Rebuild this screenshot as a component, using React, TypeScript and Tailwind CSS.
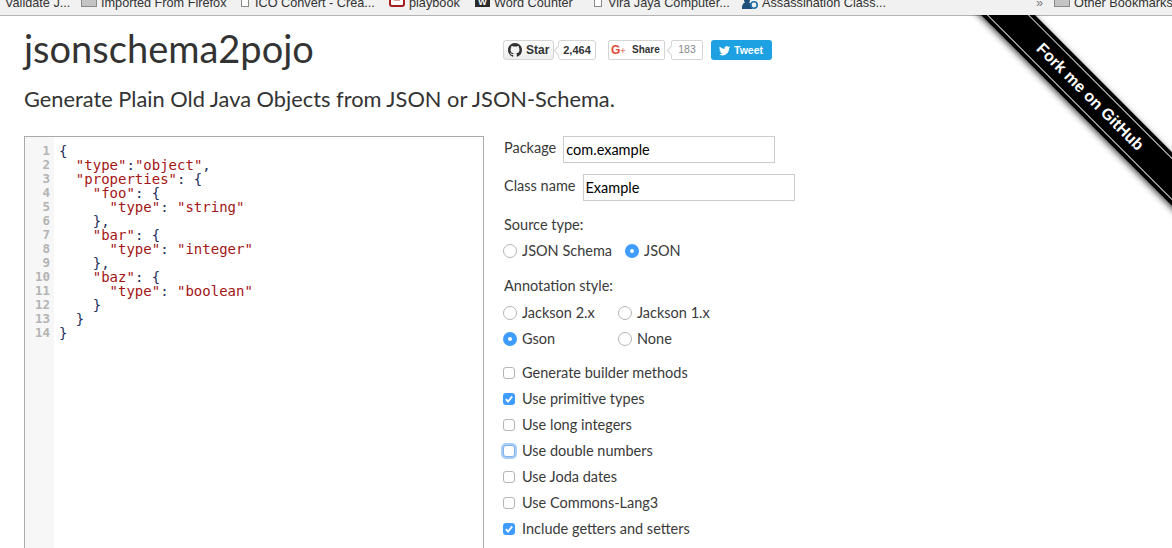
import React from 'react';

const font = "font-['Lato','Liberation_Sans',sans-serif]";

const bookmarks = [
  { label: 'Validate J...', icon: 'none', width: 'w-[76px]' },
  { label: 'Imported From Firefox', icon: 'folder', width: 'w-[159px]' },
  { label: 'ICO Convert - Crea...', icon: 'page', width: 'w-[149px]' },
  { label: 'playbook', icon: 'play', width: 'w-[86px]' },
  { label: 'Word Counter', icon: 'word', width: 'w-[118px]' },
  { label: 'Vira Jaya Computer...', icon: 'page', width: 'w-[149px]' },
  { label: 'Assassination Class...', icon: 'ac', width: 'w-[190px]' },
];

const BookmarkIcon = ({ type }: { type: string }) => {
  if (type === 'folder') return <span className="h-[9px] w-[16px] border border-[#8a8a8a] bg-[#c4c4c4]" />;
  if (type === 'page') return <span className="mr-[2px] ml-[1px] h-[9px] w-[8px] border border-[#888] bg-white" />;
  if (type === 'play')
    return (
      <svg viewBox="0 0 16 9" className="h-[9px] w-[16px]">
        <path d="M1 0v6a2 2 0 0 0 2 2h10a2 2 0 0 0 2-2V0" fill="white" stroke="#a61c22" strokeWidth="2" />
        <path d="M5 0h6v3H5z" fill="#d9a0a0" />
      </svg>
    );
  if (type === 'word')
    return (
      <span className="flex h-[9px] w-[15px] items-end justify-center bg-[#2a2a2a] text-[9px] leading-none font-bold text-white">W</span>
    );
  if (type === 'ac')
    return (
      <svg viewBox="0 0 16 11" className="h-[11px] w-[16px]">
        <circle cx="5" cy="2" r="3" fill="#1f4f78" />
        <path d="M0 9a5 5 0 0 1 10 0v2H0z" fill="#1f4f78" />
        <circle cx="12" cy="7" r="3.2" fill="none" stroke="#1f6fa8" strokeWidth="1.6" />
      </svg>
    );
  return null;
};

const Radio = ({ label, checked, className = '' }: { label: string; checked?: boolean; className?: string }) => (
  <label className={`flex items-center gap-[5px] ${className}`}>
    {checked ? (
      <span className="flex size-[14px] items-center justify-center rounded-full bg-[#3f9cff]">
        <span className="size-[4px] rounded-full bg-white" />
      </span>
    ) : (
      <span className="size-[14px] rounded-full border border-[#b5b5b5] bg-white" />
    )}
    <span>{label}</span>
  </label>
);

const Checkbox = ({ label, checked, focused }: { label: string; checked?: boolean; focused?: boolean }) => (
  <label className="-ml-px flex h-[26px] items-center gap-[7px]">
    {checked ? (
      <span className="flex size-[12px] items-center justify-center rounded-[3px] bg-[#3f9cff]">
        <svg viewBox="0 0 12 12" className="size-[12px]" fill="none" stroke="white" strokeWidth="1.8">
          <path d="M2.8 6.2 5 8.6 9.2 3.4" />
        </svg>
      </span>
    ) : (
      <span
        className={`size-[12px] rounded-[3px] border bg-white ${
          focused ? 'border-[#7fb2e8] shadow-[0_0_0_2px_#a9cdf5]' : 'border-[#b5b5b5]'
        }`}
      />
    )}
    <span>{label}</span>
  </label>
);

const code = [
  ['{'],
  ['  ', '"type"', ':', '"object"', ','],
  ['  ', '"properties"', ': {'],
  ['    ', '"foo"', ': {'],
  ['      ', '"type"', ': ', '"string"'],
  ['    },'],
  ['    ', '"bar"', ': {'],
  ['      ', '"type"', ': ', '"integer"'],
  ['    },'],
  ['    ', '"baz"', ': {'],
  ['      ', '"type"', ': ', '"boolean"'],
  ['    }'],
  ['  }'],
  ['}'],
];

const CodeEditor = () => (
  <div className="flex h-[430px] w-[460px] shrink-0 border border-[#aaa] bg-white font-['DejaVu_Sans_Mono',monospace] text-[14px] leading-[14px]">
    <div className="w-[29px] bg-[#f7f7f7] pt-[7px] pr-[4px] text-right text-[12.5px] font-bold text-[#b4b4b4]">
      {code.map((_, i) => (
        <div key={i}>{i + 1}</div>
      ))}
    </div>
    <div className="pt-[7px] pl-[5px] whitespace-pre text-[#1d2f5c]">
      {code.map((parts, i) => (
        <div key={i} className="h-[14px]">
          {parts.map((p, j) => (
            <span key={j} className={p.startsWith('"') ? 'text-[#a31515]' : ''}>
              {p}
            </span>
          ))}
        </div>
      ))}
    </div>
  </div>
);

const Notch = () => (
  <span className="absolute top-[6px] left-[-4px] size-[7px] rotate-45 border-b border-l border-[#d5d5d5] bg-white" />
);

const SocialButtons = () => (
  <div className="flex items-center font-['Liberation_Sans',sans-serif] text-[11px] font-bold text-[#333]">
    <div className="flex h-[20px] w-[51px] items-center gap-[4px] rounded-[3px] border border-[#d5d5d5] bg-linear-to-b from-[#fcfcfc] to-[#eeeeee] pl-[4px] text-[12px]">
      <svg viewBox="0 0 16 16" className="size-[14px]" fill="#333">
        <path d="M8 0C3.58 0 0 3.58 0 8c0 3.54 2.29 6.53 5.47 7.59.4.07.55-.17.55-.38 0-.19-.01-.82-.01-1.49-2.01.37-2.53-.49-2.69-.94-.09-.23-.48-.94-.82-1.13-.28-.15-.68-.52-.01-.53.63-.01 1.08.58 1.23.82.72 1.21 1.87.87 2.33.66.07-.52.28-.87.51-1.07-1.78-.2-3.64-.89-3.64-3.95 0-.87.31-1.59.82-2.15-.08-.2-.36-1.02.08-2.12 0 0 .67-.21 2.2.82.64-.18 1.32-.27 2-.27s1.36.09 2 .27c1.53-1.04 2.2-.82 2.2-.82.44 1.1.16 1.92.08 2.12.51.56.82 1.27.82 2.15 0 3.07-1.87 3.75-3.65 3.95.29.25.54.73.54 1.48 0 1.07-.01 1.93-.01 2.2 0 .21.15.46.55.38A8.01 8.01 0 0 0 16 8c0-4.42-3.58-8-8-8z" />
      </svg>
      <span>Star</span>
    </div>
    <div className="relative ml-[4px] flex h-[20px] w-[38px] items-center justify-center rounded-[3px] border border-[#d5d5d5] bg-white">
      <Notch />
      <span className="relative">2,464</span>
    </div>
    <div className="ml-[12px] flex h-[20px] w-[57px] items-center rounded-[2px] border border-[#d5d5d5] bg-white pl-[2px] text-[10px]">
      <span className="w-[21px] text-[#dd4b39]">
        <span className="text-[12px]">G</span>
        <span className="text-[9px] text-[#e58a7e]">+</span>
      </span>
      <span className="-mt-[1px]">Share</span>
    </div>
    <div className="relative ml-[6px] flex h-[20px] w-[32px] items-center justify-center rounded-[2px] border border-[#d5d5d5] bg-white text-[10.5px] font-normal text-[#888]">
      <Notch />
      <span className="relative">183</span>
    </div>
    <div className="ml-[8px] flex h-[20px] w-[61px] items-center gap-[3px] rounded-[3px] bg-[#1da1e2] pl-[7px] text-[10.5px] text-white">
      <svg viewBox="0 0 24 24" className="size-[13px]" fill="white">
        <path d="M22.46 6c-.77.35-1.6.58-2.46.69a4.3 4.3 0 0 0 1.88-2.38 8.59 8.59 0 0 1-2.72 1.04 4.28 4.28 0 0 0-7.29 3.9A12.14 12.14 0 0 1 3.05 4.79a4.28 4.28 0 0 0 1.33 5.71 4.24 4.24 0 0 1-1.94-.54v.05a4.28 4.28 0 0 0 3.43 4.2 4.3 4.3 0 0 1-1.93.07 4.29 4.29 0 0 0 4 2.97A8.59 8.59 0 0 1 1.6 19.1a12.12 12.12 0 0 0 6.56 1.92c7.88 0 12.2-6.53 12.2-12.19l-.01-.56A8.7 8.7 0 0 0 22.46 6z" />
      </svg>
      <span className="mt-[1px]">Tweet</span>
    </div>
  </div>
);

export default function App() {
  return (
    <div className={`relative h-[548px] w-[1172px] overflow-hidden bg-white text-[#3a3a3a] ${font}`}>
      <div className="flex h-[16px] items-start overflow-hidden border-b border-[#b4b4b4] bg-[#f1f1f1] pl-[5px] font-['Liberation_Sans',sans-serif] text-[12.7px] leading-[11px] text-[#333]">
        <div className="-mt-[2px] flex flex-1 items-start">
          {bookmarks.map((b) => (
            <div key={b.label} className={`flex shrink-0 items-start gap-[4px] ${b.width}`}>
              <BookmarkIcon type={b.icon} />
              <span className="whitespace-nowrap">{b.label}</span>
            </div>
          ))}
          <span className="ml-[104px] text-[#777]">»</span>
          <div className="ml-[11px] flex shrink-0 items-start gap-[4px]">
            <BookmarkIcon type="folder" />
            <span className="whitespace-nowrap">Other Bookmarks</span>
          </div>
        </div>
      </div>

      <div className="absolute top-[15px] right-0 h-[240px] w-[220px] overflow-hidden">
        <div className="absolute top-[63px] left-[-32px] w-[340px] rotate-45 bg-black py-[4px] text-center shadow-[0_2px_6px_rgba(0,0,0,0.7)]">
          <div className="border-y border-[#ccc] py-[4px] font-['Liberation_Sans',sans-serif] text-[16px] leading-[20px] font-bold text-white">
            Fork me on GitHub
          </div>
        </div>
      </div>

      <div className="pl-[24px]">
        <div className="flex h-[68px] items-start">
          <h1 className="mt-[8px] w-[479px] text-[38px] leading-[48px] text-[#333]">jsonschema2pojo</h1>
          <div className="mt-[24px]">
            <SocialButtons />
          </div>
        </div>
        <p className="text-[21.8px] leading-[30px] text-[#333]">Generate Plain Old Java Objects from JSON or JSON-Schema.</p>

        <div className="mt-[22px] flex items-start">
          <CodeEditor />
          <div className="ml-[20px] text-[14.5px] leading-[18px]">
            <div className="flex items-start gap-[7px]">
              <span className="mt-[3px]">Package</span>
              <input readOnly value="com.example" className="h-[27px] w-[212px] border border-[#ccc] pr-[2px] pl-[2px] text-black outline-none" />
            </div>
            <div className="mt-[11px] flex items-start gap-[8px]">
              <span className="mt-[3px]">Class name</span>
              <input readOnly value="Example" className="h-[27px] w-[212px] border border-[#ccc] pr-[2px] pl-[1px] text-black outline-none" />
            </div>
            <div className="mt-[15px]">Source type:</div>
            <div className="mt-[8px] -ml-px flex h-[18px]">
              <Radio label="JSON Schema" className="w-[122px]" />
              <Radio label="JSON" checked />
            </div>
            <div className="mt-[17px]">Annotation style:</div>
            <div className="mt-[9px] -ml-px grid grid-cols-[115px_1fr] gap-y-[8px]">
              <Radio label="Jackson 2.x" />
              <Radio label="Jackson 1.x" />
              <Radio label="Gson" checked />
              <Radio label="None" />
            </div>
            <div className="mt-[12px]">
              <Checkbox label="Generate builder methods" />
              <Checkbox label="Use primitive types" checked />
              <Checkbox label="Use long integers" />
              <Checkbox label="Use double numbers" focused />
              <Checkbox label="Use Joda dates" />
              <Checkbox label="Use Commons-Lang3" />
              <Checkbox label="Include getters and setters" checked />
            </div>
          </div>
        </div>
      </div>
    </div>
  );
}
